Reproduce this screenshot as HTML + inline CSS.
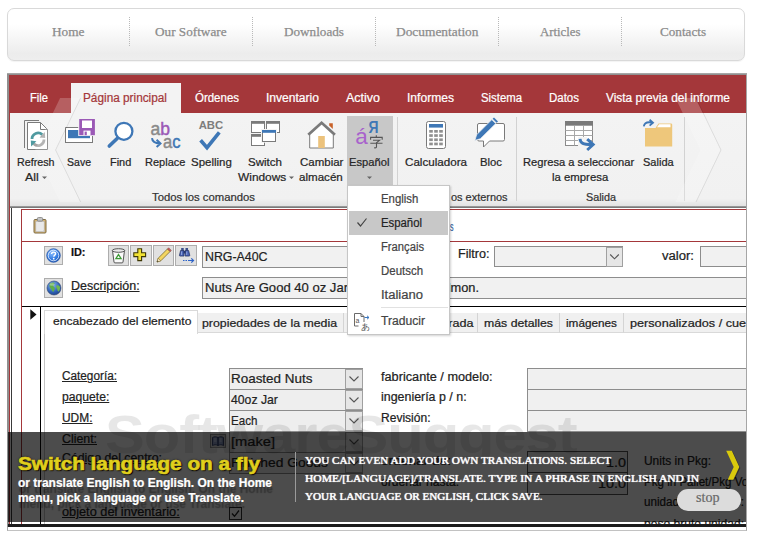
<!DOCTYPE html>
<html><head><meta charset="utf-8"><title>Switch language</title>
<style>
html,body{margin:0;padding:0;background:#fff;}
body{width:763px;height:533px;overflow:hidden;position:relative;font-family:"Liberation Sans",sans-serif;}
.a{position:absolute;}
.t{position:absolute;white-space:nowrap;transform-origin:0 50%;display:inline-block;-webkit-text-stroke:.22px currentColor;}
#nav{left:7px;top:8px;width:738px;height:53px;box-sizing:border-box;border:1px solid #d9d9d9;border-radius:7px;
 background:linear-gradient(#fff 0,#fff 30%,#ececec 88%,#eee 100%);box-shadow:0 1px 1px rgba(0,0,0,.05);}
.nd{position:absolute;top:17px;width:0;height:29px;border-left:1px dotted #b9b9b9;}
#shot{left:0;top:0;width:746px;height:527px;overflow:hidden;}
.ln{position:absolute;background:#000;}
.box{position:absolute;box-sizing:border-box;border:1px solid #8d8d8d;background:#f1f1f1;}
.cb{position:absolute;box-sizing:border-box;border:1px solid #9a9a9a;background:#ececec;}
.tab{position:absolute;top:313px;height:20px;background:#f0f0f0;box-sizing:border-box;border-right:1px solid #d4d4d4;border-bottom:1px solid #d9d9d9}
</style></head><body>
<!-- top navigation -->
<div id="nav" class="a"></div>
<div class="nd" style="left:129px"></div><div class="nd" style="left:252px"></div><div class="nd" style="left:375px"></div>
<div class="nd" style="left:498px"></div><div class="nd" style="left:621px"></div>
<span class="t" style="left:51.75px;top:23.30px;font:normal 13.5px/18px 'Liberation Serif', serif;color:#8b8b8b;transform:scaleX(0.9848);-webkit-text-stroke:.25px #8b8b8b;">Home</span>
<span class="t" style="left:155.25px;top:23.30px;font:normal 13.5px/18px 'Liberation Serif', serif;color:#8b8b8b;transform:scaleX(0.9780);-webkit-text-stroke:.25px #8b8b8b;">Our Software</span>
<span class="t" style="left:284.0px;top:23.30px;font:normal 13.5px/18px 'Liberation Serif', serif;color:#8b8b8b;transform:scaleX(0.9756);-webkit-text-stroke:.25px #8b8b8b;">Downloads</span>
<span class="t" style="left:395.75px;top:23.30px;font:normal 13.5px/18px 'Liberation Serif', serif;color:#8b8b8b;transform:scaleX(0.9912);-webkit-text-stroke:.25px #8b8b8b;">Documentation</span>
<span class="t" style="left:539.75px;top:23.30px;font:normal 13.5px/18px 'Liberation Serif', serif;color:#8b8b8b;transform:scaleX(0.9474);-webkit-text-stroke:.25px #8b8b8b;">Articles</span>
<span class="t" style="left:660.0px;top:23.30px;font:normal 13.5px/18px 'Liberation Serif', serif;color:#8b8b8b;transform:scaleX(0.9735);-webkit-text-stroke:.25px #8b8b8b;">Contacts</span>

<!-- frame -->
<div class="a" style="left:7px;top:73px;width:740px;height:458px;box-sizing:border-box;border:1px solid #a6a6a6;border-bottom-color:#c2c2c2;"></div>
<div id="shot" class="a">
 <!-- window chrome -->
 <div class="a" style="left:8px;top:74px;width:738px;height:453px;background:#fff"></div>
 <div class="a" style="left:7px;top:74px;width:2px;height:453px;background:#8e8e8e"></div>
 <div class="a" style="left:8px;top:74px;width:738px;height:39px;background:#a4373a;border-top:1px solid #909090;box-sizing:border-box"></div>
 <div class="a" style="left:7px;top:74px;width:2px;height:453px;background:#8e8e8e"></div>
 <div class="a" style="left:10px;top:113px;width:736px;height:93px;background:linear-gradient(#f3f3f3 0,#f1f1f1 92%,#e2e2e2 100%)"></div>
 <div class="a" style="left:9px;top:113px;width:1px;height:414px;background:#a4373a"></div>
 <div class="a" style="left:10px;top:206px;width:736px;height:2px;background:linear-gradient(#a5a5a5,#6a6a6a)"></div>
 <div class="a" style="left:11px;top:208px;width:1px;height:320px;background:#3a3a3a"></div>
 <!-- active tab -->
 <div class="a" style="left:71px;top:83px;width:110px;height:30px;background:#f3f3f3"></div>
 <!-- Español highlighted -->
 <div class="a" style="left:347px;top:116px;width:46px;height:72px;background:#c8c8c8"></div>
 <!-- group separators -->
 <div class="a" style="left:397px;top:117px;width:1px;height:84px;background:#d2d2d2"></div>
 <div class="a" style="left:516px;top:117px;width:1px;height:84px;background:#d2d2d2"></div>
 <div class="a" style="left:684px;top:117px;width:1px;height:84px;background:#d2d2d2"></div>
  <svg class="a" style="left:0;top:0" width="746" height="210" viewBox="0 0 746 210" font-family="Liberation Sans, sans-serif">
 <!-- Refresh All -->
 <path d="M24.500 148V120.500H39" fill="none" stroke="#7a7a7a" stroke-width="1"/>
 <path d="M27.500 122.500H40.500L47.500 129.500V149.500H27.500z" fill="#fff" stroke="#7a7a7a" stroke-width="1"/>
 <path d="M40.500 122.500V129.500H47.500" fill="none" stroke="#7a7a7a" stroke-width="1"/>
 <path d="M32 139a6 6 0 0 1 10.300-4.200" fill="none" stroke="#4f9aa0" stroke-width="2.800"/>
 <path d="M44 139.600a6 6 0 0 1-10.300 4.200" fill="none" stroke="#a3a3a3" stroke-width="2.800"/>
 <path d="M39.600 137.400l5.600.6-.4-6z" fill="#a3a3a3"/>
 <path d="M36.400 141.200l-5.600-.6.400 6z" fill="#4f9aa0"/>
 <!-- Save -->
 <rect x="65.500" y="127.500" width="27" height="15" fill="#fff" stroke="#7a7a7a"/>
 <rect x="68" y="130" width="22" height="8.200" fill="#3e77b6"/>
 <rect x="78.200" y="118" width="17.600" height="18" fill="#f3f3f3"/>
 <path d="M79.200 119h15.700v16.200H79.200z" fill="#9b59b6"/>
 <rect x="82" y="120.500" width="10" height="7.500" fill="#fff"/>
 <rect x="83.500" y="130.600" width="7" height="4.600" fill="#fff"/>
 <rect x="84.600" y="131.600" width="2.200" height="3.600" fill="#9b59b6"/>
 <!-- Find -->
 <circle cx="123.900" cy="131.300" r="8.500" fill="#fff" stroke="#3e77b6" stroke-width="2.300"/>
 <path d="M117.400 138.200L109.300 146" stroke="#3e77b6" stroke-width="3.600" stroke-linecap="round"/>
 <!-- Replace -->
 <text x="150.500" y="134.700" font-size="18" fill="#8a8a8a" stroke="#8a8a8a" stroke-width=".45" textLength="19.500" lengthAdjust="spacingAndGlyphs">a<tspan fill="#9b59b6" stroke="#9b59b6">b</tspan></text>
 <text x="163" y="147.500" font-size="18" fill="#8a8a8a" stroke="#8a8a8a" stroke-width=".45" textLength="17.500" lengthAdjust="spacingAndGlyphs">a<tspan fill="#3e77b6" stroke="#3e77b6">c</tspan></text>
 <path d="M152 138.200c.3 3.800 2.500 5.200 8 5.200M156.600 139.800l3.900 3.600-3.900 3.600" fill="none" stroke="#3e77b6" stroke-width="2"/>
 <!-- Spelling -->
 <text x="198.700" y="128.500" font-size="11" font-weight="bold" fill="#7d7d7d" textLength="24.500" lengthAdjust="spacingAndGlyphs">ABC</text>
 <path d="M200.600 140.200L207 147.600L219.300 132.300" fill="none" stroke="#3e77b6" stroke-width="3.600"/>
 <!-- Switch windows -->
 <g fill="#fff" stroke="#7a7a7a"><rect x="251.500" y="121.500" width="13" height="11"/><rect x="266.500" y="121.500" width="13" height="11"/><rect x="251.500" y="134.500" width="13" height="11"/></g>
 <g fill="#7a7a7a"><rect x="251" y="121" width="14" height="2.800"/><rect x="266" y="121" width="14" height="2.800"/><rect x="251" y="134" width="14" height="2.800"/></g>
 <rect x="261" y="129" width="16" height="13.700" fill="#f3f3f3"/>
 <rect x="262.500" y="130.500" width="13" height="11" fill="#fff" stroke="#7a7a7a"/>
 <rect x="262" y="130" width="14" height="2.800" fill="#3e77b6"/>
 <!-- House -->
 <path d="M309.700 134V148H333.300V134" fill="#fff" stroke="#7a7a7a"/>
 <path d="M310.200 135L321.600 124 332.800 135z" fill="#fff"/>
 <path d="M329.200 123.200h3.600v5.700l-3.600-3.400z" fill="#c8622a"/>
 <rect x="318.200" y="136" width="6.600" height="12" fill="#ecc27c"/>
 <path d="M308.300 134.800L321.600 122.800L334.900 134.800" fill="none" stroke="#7a7a7a" stroke-width="2.800" stroke-linejoin="miter"/>
 <!-- Español: á Я 字 -->
 <text x="355.200" y="143.900" font-size="22.5" fill="#a863cc">á</text>
 <text x="368.600" y="133" font-size="16" font-weight="bold" fill="#3e77b6" textLength="10" lengthAdjust="spacingAndGlyphs">Я</text>
 <g fill="none" stroke="#555" stroke-width="1.100"><path d="M376.300 135.300v1.800M370.600 139.800v-2.400h11.600v2.400M373 140.200h6.600l-3 2.400M370.300 143.300h12.200M376.500 142.300v4.500c0 1-.8 1.200-2.400 1"/></g>
 <!-- small arrows -->
 <g fill="#666"><path d="M42 176.500h5l-2.500 2.600zM289 176.500h5l-2.500 2.600zM367 176.500h5l-2.500 2.600z"/></g>
 <!-- Calculator -->
 <rect x="426.500" y="121.500" width="19" height="27" rx="2" fill="#fff" stroke="#7a7a7a"/>
 <rect x="429" y="124" width="14" height="3.600" fill="#3e77b6"/>
 <g fill="#909090"><rect x="429.200" y="130" width="3.600" height="2.700"/><rect x="434.200" y="130" width="3.600" height="2.700"/><rect x="439.200" y="130" width="3.600" height="2.700"/>
 <rect x="429.200" y="134.200" width="3.600" height="2.700"/><rect x="434.200" y="134.200" width="3.600" height="2.700"/><rect x="439.200" y="134.200" width="3.600" height="2.700"/>
 <rect x="429.200" y="138.400" width="3.600" height="2.700"/><rect x="434.200" y="138.400" width="3.600" height="2.700"/><rect x="439.200" y="138.400" width="3.600" height="2.700"/>
 <rect x="429.200" y="142.600" width="3.600" height="2.700"/><rect x="434.200" y="142.600" width="3.600" height="2.700"/><rect x="439.200" y="142.600" width="3.600" height="2.700"/></g>
 <!-- Bloc -->
 <path d="M479 123.500H503a1.500 1.500 0 0 1 1.500 1.500V139.500a1.500 1.500 0 0 1-1.500 1.500H489.500L483.500 147V141H479a1.500 1.500 0 0 1-1.500-1.500V125a1.500 1.500 0 0 1 1.500-1.500z" fill="#fff" stroke="#7a7a7a"/>
 <path d="M474.800 140.400l1.800-5.600L491.800 119.600l4 4-15.400 15.200z" fill="#3e77b6" stroke="#f3f3f3" stroke-width=".8"/>
 <path d="M492.600 118.800l1.400-1.400 4 4-1.400 1.400z" fill="#3e77b6"/>
 <!-- Table w/ arrow -->
 <rect x="565.500" y="121.500" width="27" height="24" fill="#fff" stroke="#8a8a8a"/>
 <rect x="565" y="121" width="28" height="4.700" fill="#7a7a7a"/>
 <path d="M565.500 130.500h27M565.500 135.500h27M565.500 140.500h27M574.500 126v19.500M583.500 126v19.500" stroke="#a8a8a8" stroke-width="1" fill="none"/>
 <path d="M578 137h9v5h8v10h-17z" fill="#f3f3f3"/>
 <path d="M580 138.800c.5 4.500 3.200 5.800 11.500 5.800M587.200 139.200l6 5.400-6 5.400" fill="none" stroke="#3e77b6" stroke-width="2.900"/>
 <!-- Folder -->
 <path d="M645 128h10.500l3-4.600H671a1.200 1.200 0 0 1 1.200 1.200V146.600H645z" fill="#eec77b"/>
 <path d="M657 127.200l2.200-3h11.300v3z" fill="#fff"/>
 <path d="M643.800 126.300c.6-3.200 3.600-4.600 8-3.800M649.600 119.800l3.400 2.900-3.400 2.900" fill="none" stroke="#3e77b6" stroke-width="1.800"/>
 </svg>

 <svg class="a" style="left:0;top:0" width="746" height="210" viewBox="0 0 746 210">
  <path d="M80.100 98L55.100 150L80.100 202H60.100L35.100 150L60.100 98z" fill="#fff" opacity=".2"/>
  <path d="M80.600 98L55.600 150L80.600 202" fill="none" stroke="#000" stroke-opacity=".09" stroke-width="1"/>
  <path d="M695.500 98L720.500 150L695.500 202H675.500L700.500 150L675.500 98z" fill="#fff" opacity=".2"/>
  <path d="M696 98L721 150L696 202" fill="none" stroke="#000" stroke-opacity=".09" stroke-width="1"/>
 </svg>
 <!-- form -->
 <div class="a" style="left:21px;top:209px;width:730px;height:330px;box-sizing:border-box;border:1px solid #a4373a;"></div>
 <div class="a" style="left:21px;top:241px;width:730px;height:1px;background:#a4373a"></div>
 <div class="box" style="left:202px;top:246px;width:150px;height:22px"></div>
 <div class="box" style="left:494px;top:246px;width:129px;height:21px"></div>
 <div class="box" style="left:700px;top:246px;width:60px;height:21px"></div>
 <div class="box" style="left:202px;top:277px;width:560px;height:22px"></div>
 <!-- subform -->
 <div class="ln" style="left:22px;top:306px;width:730px;height:1px"></div>
 <div class="ln" style="left:40px;top:306px;width:1px;height:230px"></div>
 <div class="a" style="left:44px;top:333px;width:1px;height:200px;background:#c4c4c4"></div>
 <div class="a" style="left:44px;top:332px;width:710px;height:1px;background:#d9d9d9"></div>
  <!-- clipboard icon -->
 <svg class="a" style="left:33px;top:216px" width="14" height="18" viewBox="0 0 14 18"><rect x="1" y="3.5" width="12" height="13.5" rx="1" fill="#d9b56c" stroke="#7d6b45" stroke-width="1"/><rect x="2.8" y="5.2" width="8.4" height="10.6" fill="#e9e9e9" stroke="#a8a8a8" stroke-width=".6"/><rect x="4.3" y="1.5" width="5.4" height="3.6" rx="1.2" fill="#c4c4c4" stroke="#808080" stroke-width=".8"/><path d="M9 16h2.4v-2.4z" fill="#c9c9c9"/></svg>
 <!-- small buttons -->
 <div class="cb" style="left:44px;top:246px;width:19px;height:19px;background:#e1e1e1;border-color:#adadad"></div>
 <div class="cb" style="left:44px;top:278px;width:19px;height:20px;background:#e1e1e1;border-color:#adadad"></div>
 <div class="cb" style="left:108px;top:245px;width:21px;height:21px;background:#e1e1e1;border-color:#adadad"></div>
 <div class="cb" style="left:130px;top:245px;width:22px;height:21px;background:#e1e1e1;border-color:#adadad"></div>
 <div class="cb" style="left:153px;top:245px;width:21px;height:21px;background:#e1e1e1;border-color:#adadad"></div>
 <div class="cb" style="left:175px;top:245px;width:22px;height:21px;background:#e1e1e1;border-color:#adadad"></div>
 <!-- help -->
 <svg class="a" style="left:46px;top:248px" width="15" height="15" viewBox="0 0 15 15"><defs><radialGradient id="hg" cx=".4" cy=".3" r=".8"><stop offset="0" stop-color="#8fc0ff"/><stop offset=".6" stop-color="#2f78e0"/><stop offset="1" stop-color="#1449a6"/></radialGradient></defs><circle cx="7.5" cy="7.5" r="6.8" fill="url(#hg)" stroke="#1d4fa3" stroke-width=".7"/><circle cx="7.5" cy="7.5" r="5.3" fill="none" stroke="#fff" stroke-width=".9" opacity=".85"/><path d="M5.6 6.1c0-1.3 .9-2 2-2s2 .7 2 1.7c0 1.3-1.8 1.4-1.8 2.9" fill="none" stroke="#fff" stroke-width="1.4"/><circle cx="7.7" cy="10.7" r=".9" fill="#fff"/></svg>
 <!-- globe -->
 <svg class="a" style="left:46px;top:280px" width="16" height="16" viewBox="0 0 16 16"><defs><radialGradient id="gg" cx=".4" cy=".3" r=".8"><stop offset="0" stop-color="#8db8f0"/><stop offset=".6" stop-color="#2f62b8"/><stop offset="1" stop-color="#1a3c80"/></radialGradient></defs><circle cx="8" cy="8" r="7" fill="url(#gg)" stroke="#30456e" stroke-width=".6"/><path d="M4 3.5c1.5-1.2 3.5-1.4 4.4-.6.6.8-.6 1.400-1 2.500-.4 1.300 1.200 1.200 1.400 2.600.2 1.600-1.200 2.200-1.200 3.800-.8.400-1.800-.800-2.200-2.200-.400-1.200-1.600-1.400-1.800-2.800-.2-1.200-.2-2.400.4-3.300z" fill="#5fae4a"/><path d="M10.500 5.500c1-.600 2.500-.3 3.300.9.500 1.500.2 3.400-.8 4.800-.8.600-1.400-.3-1.600-1.500-.2-1-.9-1.600-1.200-2.600-.2-.7-.1-1.300.3-1.600z" fill="#6fb752"/><ellipse cx="6" cy="4.500" rx="2.500" ry="1.300" fill="#fff" opacity=".35"/></svg>
 <!-- trash/recycle -->
 <svg class="a" style="left:110px;top:247px" width="17" height="17" viewBox="0 0 17 17"><path d="M2.500 3.500h12l-1.500 11.500a1 1 0 0 1-1 .9h-7a1 1 0 0 1-1-.9z" fill="#fafafa" stroke="#555" stroke-width="1"/><ellipse cx="8.500" cy="3.500" rx="6.200" ry="1.800" fill="#e9e9e9" stroke="#555" stroke-width="1"/><path d="M8.500 7.500l2.600 4.200H5.900z" fill="none" stroke="#3c9a35" stroke-width="1.300"/></svg>
 <!-- plus -->
 <svg class="a" style="left:133px;top:248px" width="14" height="14" viewBox="0 0 14 14"><path d="M4.800 .8h3.800v4h4v3.800h-4v4H4.800v-4H.8V4.800h4z" fill="#f1e234" stroke="#3d3705" stroke-width="1.100"/></svg>
 <!-- pencil -->
 <svg class="a" style="left:155px;top:247px" width="17" height="17" viewBox="0 0 17 17"><path d="M2 15l1.200-3.800 9.300-9.300 2.600 2.600-9.300 9.300z" fill="#f3d560" stroke="#7b6a2a" stroke-width=".8"/><path d="M12.500 1.900l1.100-1.100 2.600 2.600-1.100 1.100z" fill="#d55c5c" stroke="#7b3a3a" stroke-width=".6"/><path d="M2 15l1.200-3.800 2.600 2.600z" fill="#f7e7c4" stroke="#7b6a2a" stroke-width=".5"/><path d="M2 15l.5-1.500 1 1z" fill="#333"/></svg>
 <!-- binoculars -->
 <svg class="a" style="left:177px;top:246px" width="19" height="19" viewBox="0 0 19 19"><g transform="translate(.3 .2) scale(.86)"><path d="M4.500 2h3v3h-3zM9.500 2h3v3h-3z" fill="#3c4f8c"/><path d="M3.800 5h4v6.500h-4.600c-.5 0-.8-.4-.7-.9zM9.200 5h4l1.300 5.600c.1.500-.2.900-.7.900H9.200z" fill="#4a63b4" stroke="#1f2c5c" stroke-width=".8"/><rect x="7.300" y="5.500" width="2.400" height="3" fill="#27376f"/><path d="M5 6.200v4M11 6.200v4" stroke="#a9baf0" stroke-width=".9"/></g><path d="M6 14.500h1.500M8.500 14.500h1.500" stroke="#2d63c8" stroke-width="1.100"/><path d="M11 14.500h5.500M14.300 12.400l2.200 2.100-2.200 2.100" fill="none" stroke="#2d63c8" stroke-width="1.200"/></svg>
 <!-- Filtro combo button -->
 <div class="cb" style="left:606px;top:247px;width:17px;height:20px;background:#e6e6e6;border-color:#a0a0a0"></div>
 <svg class="a" style="left:609px;top:253px" width="11" height="8" viewBox="0 0 11 8"><path d="M1.200 1.500l4.300 4.300 4.300-4.300" fill="none" stroke="#555" stroke-width="1.100"/></svg>
 <!-- record selector arrow -->
 <svg class="a" style="left:30px;top:309px" width="7" height="11" viewBox="0 0 7 11"><path d="M.3 .3l6.200 5.200-6.200 5.200z" fill="#111"/></svg>
 <!-- tabs -->
 <div class="tab" style="left:197px;width:147px"></div>
 <div class="tab" style="left:344px;width:134px"></div>
 <div class="tab" style="left:478px;width:82px"></div>
 <div class="tab" style="left:560px;width:64px"></div>
 <div class="tab" style="left:624px;width:140px"></div>
 <div class="a" style="left:44px;top:310px;width:154px;height:24px;background:#fff;box-sizing:border-box;border:1px solid #d9d9d9;border-bottom:0"></div>
 <!-- combos -->
 <div class="box" style="left:229px;top:368px;width:134px;height:22px;background:#eee"></div>
 <div class="box" style="left:229px;top:389px;width:134px;height:22px;background:#eee"></div>
 <div class="box" style="left:229px;top:410px;width:134px;height:22px;background:#eee"></div>
 <div class="box" style="left:229px;top:431px;width:134px;height:22px;background:#eee"></div>
 <div class="box" style="left:229px;top:452px;width:134px;height:22px;background:#eee"></div>
 <div class="cb" style="left:345px;top:369px;width:18px;height:20px;background:#e6e6e6;border-color:#a0a0a0"></div>
 <svg class="a" style="left:348px;top:375px" width="12" height="8" viewBox="0 0 12 8"><path d="M1.500 1.500l4.500 4.500 4.500-4.500" fill="none" stroke="#555" stroke-width="1.100"/></svg>
 <div class="cb" style="left:345px;top:390px;width:18px;height:20px;background:#e6e6e6;border-color:#a0a0a0"></div>
 <svg class="a" style="left:348px;top:396px" width="12" height="8" viewBox="0 0 12 8"><path d="M1.500 1.500l4.500 4.500 4.500-4.500" fill="none" stroke="#555" stroke-width="1.100"/></svg>
 <div class="cb" style="left:345px;top:411px;width:18px;height:20px;background:#e6e6e6;border-color:#a0a0a0"></div>
 <svg class="a" style="left:348px;top:417px" width="12" height="8" viewBox="0 0 12 8"><path d="M1.500 1.500l4.500 4.500 4.500-4.500" fill="none" stroke="#555" stroke-width="1.100"/></svg>
 <div class="cb" style="left:345px;top:432px;width:18px;height:20px;background:#e6e6e6;border-color:#a0a0a0"></div>
 <svg class="a" style="left:348px;top:438px" width="12" height="8" viewBox="0 0 12 8"><path d="M1.500 1.500l4.500 4.500 4.500-4.500" fill="none" stroke="#555" stroke-width="1.100"/></svg>
 <div class="cb" style="left:345px;top:453px;width:18px;height:20px;background:#e6e6e6;border-color:#a0a0a0"></div>
 <svg class="a" style="left:348px;top:459px" width="12" height="8" viewBox="0 0 12 8"><path d="M1.500 1.500l4.500 4.500 4.500-4.500" fill="none" stroke="#555" stroke-width="1.100"/></svg>
 <!-- right boxes -->
 <div class="box" style="left:527px;top:368px;width:240px;height:22px;background:#f0f0f0"></div>
 <div class="box" style="left:527px;top:389px;width:240px;height:22px;background:#f0f0f0"></div>
 <div class="box" style="left:527px;top:410px;width:240px;height:22px;background:#f0f0f0"></div>
 <div class="box" style="left:527px;top:451px;width:101px;height:22px;background:#f0f0f0;border-color:#555"></div>
 <div class="box" style="left:527px;top:472px;width:101px;height:23px;background:#f0f0f0;border-color:#555"></div>
 <!-- book icon -->
 <svg class="a" style="left:210px;top:434px" width="16" height="14" viewBox="0 0 16 14"><rect x=".5" y=".5" width="15" height="13" fill="#d8d8d8" stroke="#9a9a9a"/><path d="M2.500 3.500c2-1 3.500-1 5.500 0v8c-2-1-3.500-1-5.500 0zM8 3.500c2-1 3.500-1 5.500 0v8c-2-1-3.500-1-5.500 0z" fill="#8c9cc4" stroke="#22305e" stroke-width=".8"/><path d="M4 5h2.500M4 7h2.500M9.500 5H12M9.500 7H12" stroke="#fff" stroke-width=".6"/></svg>
 <!-- checkbox -->
 <div class="a" style="left:229px;top:507px;width:13px;height:13px;box-sizing:border-box;border:1px solid #333;background:#fff"></div>
 <svg class="a" style="left:230px;top:508px" width="11" height="11" viewBox="0 0 11 11"><path d="M2 5.500l2.500 2.800L9 2.500" fill="none" stroke="#222" stroke-width="1.300"/></svg>

 <span class="t" style="left:30px;top:90.00px;font:normal 12px/16px 'Liberation Sans', sans-serif;color:#fff;transform:scaleX(0.9305);">File</span>
<span class="t" style="left:83.4px;top:90.00px;font:normal 12px/16px 'Liberation Sans', sans-serif;color:#a4373a;transform:scaleX(0.9837);">Página principal</span>
<span class="t" style="left:195px;top:90.00px;font:normal 12px/16px 'Liberation Sans', sans-serif;color:#fff;transform:scaleX(0.9559);">Órdenes</span>
<span class="t" style="left:266px;top:90.00px;font:normal 12px/16px 'Liberation Sans', sans-serif;color:#fff;transform:scaleX(1.0056);">Inventario</span>
<span class="t" style="left:346px;top:90.00px;font:normal 12px/16px 'Liberation Sans', sans-serif;color:#fff;transform:scaleX(1.0402);">Activo</span>
<span class="t" style="left:407px;top:90.00px;font:normal 12px/16px 'Liberation Sans', sans-serif;color:#fff;transform:scaleX(1.0067);">Informes</span>
<span class="t" style="left:481px;top:90.00px;font:normal 12px/16px 'Liberation Sans', sans-serif;color:#fff;transform:scaleX(0.9456);">Sistema</span>
<span class="t" style="left:549px;top:90.00px;font:normal 12px/16px 'Liberation Sans', sans-serif;color:#fff;transform:scaleX(0.9567);">Datos</span>
<span class="t" style="left:606px;top:90.00px;font:normal 12px/16px 'Liberation Sans', sans-serif;color:#fff;transform:scaleX(0.9905);">Vista previa del informe</span>
<span class="t" style="left:16.5px;top:154.70px;font:normal 11.5px/15px 'Liberation Sans', sans-serif;color:#262626;transform:scaleX(0.9310);">Refresh</span>
<span class="t" style="left:25px;top:170.30px;font:normal 11.5px/15px 'Liberation Sans', sans-serif;color:#262626;transform:scaleX(1.0719);">All</span>
<span class="t" style="left:67.1px;top:154.70px;font:normal 11.5px/15px 'Liberation Sans', sans-serif;color:#262626;transform:scaleX(0.9154);">Save</span>
<span class="t" style="left:109.7px;top:154.70px;font:normal 11.5px/15px 'Liberation Sans', sans-serif;color:#262626;transform:scaleX(0.9520);">Find</span>
<span class="t" style="left:144.5px;top:154.70px;font:normal 11.5px/15px 'Liberation Sans', sans-serif;color:#262626;transform:scaleX(0.9573);">Replace</span>
<span class="t" style="left:190.5px;top:154.70px;font:normal 11.5px/15px 'Liberation Sans', sans-serif;color:#262626;transform:scaleX(0.9995);">Spelling</span>
<span class="t" style="left:248px;top:154.70px;font:normal 11.5px/15px 'Liberation Sans', sans-serif;color:#262626;transform:scaleX(1.0037);">Switch</span>
<span class="t" style="left:237.5px;top:170.30px;font:normal 11.5px/15px 'Liberation Sans', sans-serif;color:#262626;transform:scaleX(1.0352);">Windows</span>
<span class="t" style="left:299.8px;top:154.70px;font:normal 11.5px/15px 'Liberation Sans', sans-serif;color:#262626;transform:scaleX(0.9984);">Cambiar</span>
<span class="t" style="left:299.4px;top:170.30px;font:normal 11.5px/15px 'Liberation Sans', sans-serif;color:#262626;transform:scaleX(1.0076);">almacén</span>
<span class="t" style="left:349.2px;top:154.70px;font:normal 11.5px/15px 'Liberation Sans', sans-serif;color:#262626;transform:scaleX(0.9720);">Español</span>
<span class="t" style="left:404.6px;top:154.70px;font:normal 11.5px/15px 'Liberation Sans', sans-serif;color:#262626;transform:scaleX(1.0118);">Calculadora</span>
<span class="t" style="left:479.7px;top:154.70px;font:normal 11.5px/15px 'Liberation Sans', sans-serif;color:#262626;transform:scaleX(0.9832);">Bloc</span>
<span class="t" style="left:523.4px;top:154.70px;font:normal 11.5px/15px 'Liberation Sans', sans-serif;color:#262626;transform:scaleX(0.9710);">Regresa a seleccionar</span>
<span class="t" style="left:551.5px;top:170.30px;font:normal 11.5px/15px 'Liberation Sans', sans-serif;color:#262626;transform:scaleX(0.9879);">la empresa</span>
<span class="t" style="left:643.2px;top:154.70px;font:normal 11.5px/15px 'Liberation Sans', sans-serif;color:#262626;transform:scaleX(0.9603);">Salida</span>
<span class="t" style="left:151.7px;top:190.00px;font:normal 11px/14px 'Liberation Sans', sans-serif;color:#333;transform:scaleX(1.0271);">Todos los comandos</span>
<span class="t" style="left:451px;top:190.00px;font:normal 11px/14px 'Liberation Sans', sans-serif;color:#333;transform:scaleX(0.9952);">os externos</span>
<span class="t" style="left:585.5px;top:190.00px;font:normal 11px/14px 'Liberation Sans', sans-serif;color:#333;transform:scaleX(0.9811);">Salida</span>
<span class="t" style="left:71.2px;top:245.30px;font:bold 11px/14px 'Liberation Sans', sans-serif;color:#111;transform:scaleX(0.9883);">ID:</span>
<span class="t" style="left:70.7px;top:277.50px;font:normal 12px/16px 'Liberation Sans', sans-serif;color:#222;transform:scaleX(1.0389);text-decoration:underline;">Descripción:</span>
<span class="t" style="left:204.8px;top:248.30px;font:normal 13px/17px 'Liberation Sans', sans-serif;color:#222;transform:scaleX(0.9506);">NRG-A40C</span>
<span class="t" style="left:204.8px;top:279.30px;font:normal 13px/17px 'Liberation Sans', sans-serif;color:#222;transform:scaleX(1.0045);">Nuts Are Good 40 oz Jar</span>
<span class="t" style="left:432.3px;top:279.30px;font:normal 13px/17px 'Liberation Sans', sans-serif;color:#222;transform:scaleX(0.9853);">Salmon.</span>
<span class="t" style="left:449.7px;top:218.50px;font:normal 12px/16px 'Liberation Sans', sans-serif;color:#2a5a9a;transform:scaleX(0.5833);">s</span>
<span class="t" style="left:458.3px;top:246.00px;font:normal 12px/16px 'Liberation Sans', sans-serif;color:#222;transform:scaleX(1.0500);">Filtro:</span>
<span class="t" style="left:662px;top:248.00px;font:normal 12px/16px 'Liberation Sans', sans-serif;color:#222;transform:scaleX(1.0905);">valor:</span>
<span class="t" style="left:53.3px;top:313.50px;font:normal 11.5px/15px 'Liberation Sans', sans-serif;color:#222;transform:scaleX(1.0507);">encabezado del elemento</span>
<span class="t" style="left:202px;top:315.50px;font:normal 11.5px/15px 'Liberation Sans', sans-serif;color:#222;transform:scaleX(1.0718);">propiedades de la media</span>
<span class="t" style="left:352.5px;top:315.50px;font:normal 11.5px/15px 'Liberation Sans', sans-serif;color:#222;transform:scaleX(1.0958);">detalles de la entrada</span>
<span class="t" style="left:484px;top:315.50px;font:normal 11.5px/15px 'Liberation Sans', sans-serif;color:#222;transform:scaleX(1.0687);">más detalles</span>
<span class="t" style="left:566px;top:315.50px;font:normal 11.5px/15px 'Liberation Sans', sans-serif;color:#222;transform:scaleX(1.0226);">imágenes</span>
<span class="t" style="left:630px;top:315.50px;font:normal 11.5px/15px 'Liberation Sans', sans-serif;color:#222;transform:scaleX(1.1005);">personalizados / cuentas</span>
<span class="t" style="left:62px;top:368.00px;font:normal 12px/16px 'Liberation Sans', sans-serif;color:#222;transform:scaleX(0.9813);text-decoration:underline;">Categoría:</span>
<span class="t" style="left:62px;top:388.90px;font:normal 12px/16px 'Liberation Sans', sans-serif;color:#222;transform:scaleX(1.0124);text-decoration:underline;">paquete:</span>
<span class="t" style="left:62px;top:409.80px;font:normal 12px/16px 'Liberation Sans', sans-serif;color:#222;transform:scaleX(0.9944);text-decoration:underline;">UDM:</span>
<span class="t" style="left:62px;top:430.80px;font:normal 12px/16px 'Liberation Sans', sans-serif;color:#222;transform:scaleX(1.0289);text-decoration:underline;">Client:</span>
<span class="t" style="left:62px;top:449.60px;font:normal 12px/16px 'Liberation Sans', sans-serif;color:#222;transform:scaleX(1.0266);text-decoration:underline;">Código del centro:</span>
<span class="t" style="left:62px;top:504.00px;font:normal 12px/16px 'Liberation Sans', sans-serif;color:#222;transform:scaleX(1.0628);text-decoration:underline;">objeto del inventario:</span>
<span class="t" style="left:231.4px;top:369.90px;font:normal 13px/17px 'Liberation Sans', sans-serif;color:#222;transform:scaleX(1.0334);">Roasted Nuts</span>
<span class="t" style="left:231.4px;top:391.10px;font:normal 13px/17px 'Liberation Sans', sans-serif;color:#222;transform:scaleX(0.9404);">40oz Jar</span>
<span class="t" style="left:231.4px;top:411.70px;font:normal 13px/17px 'Liberation Sans', sans-serif;color:#222;transform:scaleX(0.8907);">Each</span>
<span class="t" style="left:231px;top:433.00px;font:normal 13.5px/18px 'Liberation Sans', sans-serif;color:#222;transform:scaleX(1.0860);">[make]</span>
<span class="t" style="left:231px;top:454.00px;font:normal 13.5px/18px 'Liberation Sans', sans-serif;color:#222;transform:scaleX(1.0258);">Finished Goods</span>
<span class="t" style="left:381.4px;top:368.50px;font:normal 12px/16px 'Liberation Sans', sans-serif;color:#222;transform:scaleX(1.0588);">fabricante / modelo:</span>
<span class="t" style="left:381.4px;top:389.40px;font:normal 12px/16px 'Liberation Sans', sans-serif;color:#222;transform:scaleX(1.0346);">ingeniería p / n:</span>
<span class="t" style="left:381.4px;top:410.00px;font:normal 12px/16px 'Liberation Sans', sans-serif;color:#222;transform:scaleX(1.0028);">Revisión:</span>
<span class="t" style="left:381.4px;top:453.00px;font:normal 12px/16px 'Liberation Sans', sans-serif;color:#222;transform:scaleX(1.1402);">ordenar de:</span>
<span class="t" style="left:381.4px;top:474.00px;font:normal 12px/16px 'Liberation Sans', sans-serif;color:#222;transform:scaleX(1.0079);">ordenar hasta:</span>
<span class="t" style="left:606px;top:453.50px;font:normal 13.5px/18px 'Liberation Sans', sans-serif;color:#222;transform:scaleX(1.0649);">1.0</span>
<span class="t" style="left:598px;top:474.50px;font:normal 13.5px/18px 'Liberation Sans', sans-serif;color:#222;transform:scaleX(1.0654);">10.0</span>
<span class="t" style="left:643.5px;top:452.60px;font:normal 12px/16px 'Liberation Sans', sans-serif;color:#222;transform:scaleX(0.9947);">Units in Pkg:</span>
<span class="t" style="left:643.5px;top:474.00px;font:normal 12px/16px 'Liberation Sans', sans-serif;color:#222;transform:scaleX(0.9643);">Pkg in Pallet/Pkg Vol:</span>
<span class="t" style="left:643.5px;top:494.00px;font:normal 12px/16px 'Liberation Sans', sans-serif;color:#222;transform:scaleX(0.9731);">unidad de paquete:</span>
<span class="t" style="left:643.5px;top:516.00px;font:normal 12px/16px 'Liberation Sans', sans-serif;color:#222;transform:scaleX(1.0058);">peso bruto unidad:</span>
<span class="t" style="left:105px;top:399.00px;font:bold 54px/70px 'Liberation Sans', sans-serif;color:rgba(0,0,0,.095);transform:scaleX(1.1066);letter-spacing:-1px;-webkit-text-stroke:0;">SoftwareSuggest</span>
  <div class="a" style="left:347px;top:185px;width:103px;height:150px;box-sizing:border-box;background:#fff;border:1px solid #c6c6c6;box-shadow:1px 1px 2px rgba(0,0,0,.18)"></div>
 <div class="a" style="left:349px;top:211px;width:99px;height:24px;background:#c8c8c8"></div>
 <div class="a" style="left:381px;top:307px;width:67px;height:1px;background:#e1e1e1"></div>
 <svg class="a" style="left:356px;top:217px" width="12" height="11" viewBox="0 0 12 11"><path d="M1.500 5.500l3 3.500L10.500 1.500" fill="none" stroke="#444" stroke-width="1.200"/></svg>
 <!-- translate icon -->
 <svg class="a" style="left:352px;top:312px" width="19" height="19" viewBox="0 0 19 19"><path d="M2.500 1.500h6.500l3 3v5.500M2.500 1.500v12.500h4" fill="none" stroke="#6a6a6a" stroke-width="1"/><path d="M9 1.500v3h3" fill="none" stroke="#6a6a6a" stroke-width="1"/><text x="3.600" y="10.500" font-family="Liberation Sans" font-size="7" fill="#555">a</text><path d="M12.500 5.500h4.500M15 3.800l2 1.700-2 1.700" fill="none" stroke="#3c78c0" stroke-width="1"/><text x="8.500" y="18" font-family="Liberation Sans" font-size="9" fill="#555">あ</text></svg>

 <span class="t" style="left:380.9px;top:191.00px;font:normal 12.5px/16px 'Liberation Sans', sans-serif;color:#444;transform:scaleX(0.9098);">English</span>
<span class="t" style="left:380.9px;top:215.00px;font:normal 12.5px/16px 'Liberation Sans', sans-serif;color:#222;transform:scaleX(0.9073);">Español</span>
<span class="t" style="left:380.9px;top:239.00px;font:normal 12.5px/16px 'Liberation Sans', sans-serif;color:#444;transform:scaleX(0.8970);">Français</span>
<span class="t" style="left:380.9px;top:263.00px;font:normal 12.5px/16px 'Liberation Sans', sans-serif;color:#444;transform:scaleX(0.9158);">Deutsch</span>
<span class="t" style="left:380.9px;top:287.00px;font:normal 12.5px/16px 'Liberation Sans', sans-serif;color:#444;transform:scaleX(1.0419);">Italiano</span>
<span class="t" style="left:380.9px;top:313.00px;font:normal 12.5px/16px 'Liberation Sans', sans-serif;color:#444;transform:scaleX(0.9694);">Traducir</span>
 <!-- overlay -->
 <div class="a" style="left:8px;top:432px;width:738px;height:90px;background:rgba(0,0,0,.7)"></div>
 <div class="a" style="left:8px;top:524px;width:738px;height:3px;background:#1c1c1c"></div>
 <div class="a" style="left:295px;top:452px;width:1px;height:50px;background:#9a9a9a"></div>
 <div class="a" style="left:677px;top:489px;width:64px;height:22px;border-radius:11px;background:#dcdcdc"></div>
 <svg class="a" style="left:720px;top:445px" width="26" height="42" viewBox="720 445 26 42"><path d="M727.200 451.800h5.600l7.500 16.200-6 12.700h-5.600l6-12.700z" fill="#000" opacity=".35"/><path d="M726.200 450.800h5.600l7.500 16.200-6 12.700h-5.600l6-12.700z" fill="#d9ca0c"/></svg>
 <span class="t" style="left:18.3px;top:452.50px;font:bold 18px/23px 'Liberation Sans', sans-serif;color:#e0cf1d;transform:scaleX(1.1521);text-shadow:1px 1px 1px #000,0 0 2px #000;-webkit-text-stroke:0.6px #e0cf1d;">Switch language on a fly</span>
<span class="t" style="left:18px;top:475.00px;font:bold 12px/16px 'Liberation Sans', sans-serif;color:#fff;transform:scaleX(0.9972);text-shadow:1px 6px 1px rgba(0,0,0,.33);">or translate English to English. On the Home</span>
<span class="t" style="left:18px;top:490.30px;font:bold 12px/16px 'Liberation Sans', sans-serif;color:#fff;transform:scaleX(0.9937);text-shadow:1px 6px 1px rgba(0,0,0,.33);">menu, pick a language or use Translate.</span>
<span class="t" style="left:304.5px;top:453.00px;font:normal 11px/14px 'Liberation Serif', serif;color:#fff;transform:scaleX(1.0177);text-shadow:0 0 1px #fff;">YOU CAN EVEN ADD YOUR OWN TRANSLATIONS. SELECT</span>
<span class="t" style="left:304.5px;top:470.50px;font:normal 11px/14px 'Liberation Serif', serif;color:#fff;transform:scaleX(1.0480);text-shadow:0 0 1px #fff;">HOME/[LANGUAGE]/TRANSLATE. TYPE IN A PHRASE IN ENGLISH AND IN</span>
<span class="t" style="left:304.5px;top:488.50px;font:normal 11px/14px 'Liberation Serif', serif;color:#fff;transform:scaleX(1.0142);text-shadow:0 0 1px #fff;">YOUR LANGUAGE OR ENGLISH, CLICK SAVE.</span>
<span class="t" style="left:695.7px;top:489.30px;font:normal 14px/18px 'Liberation Serif', serif;color:#696969;transform:scaleX(1.0067);">stop</span>
</div>
</body></html>
